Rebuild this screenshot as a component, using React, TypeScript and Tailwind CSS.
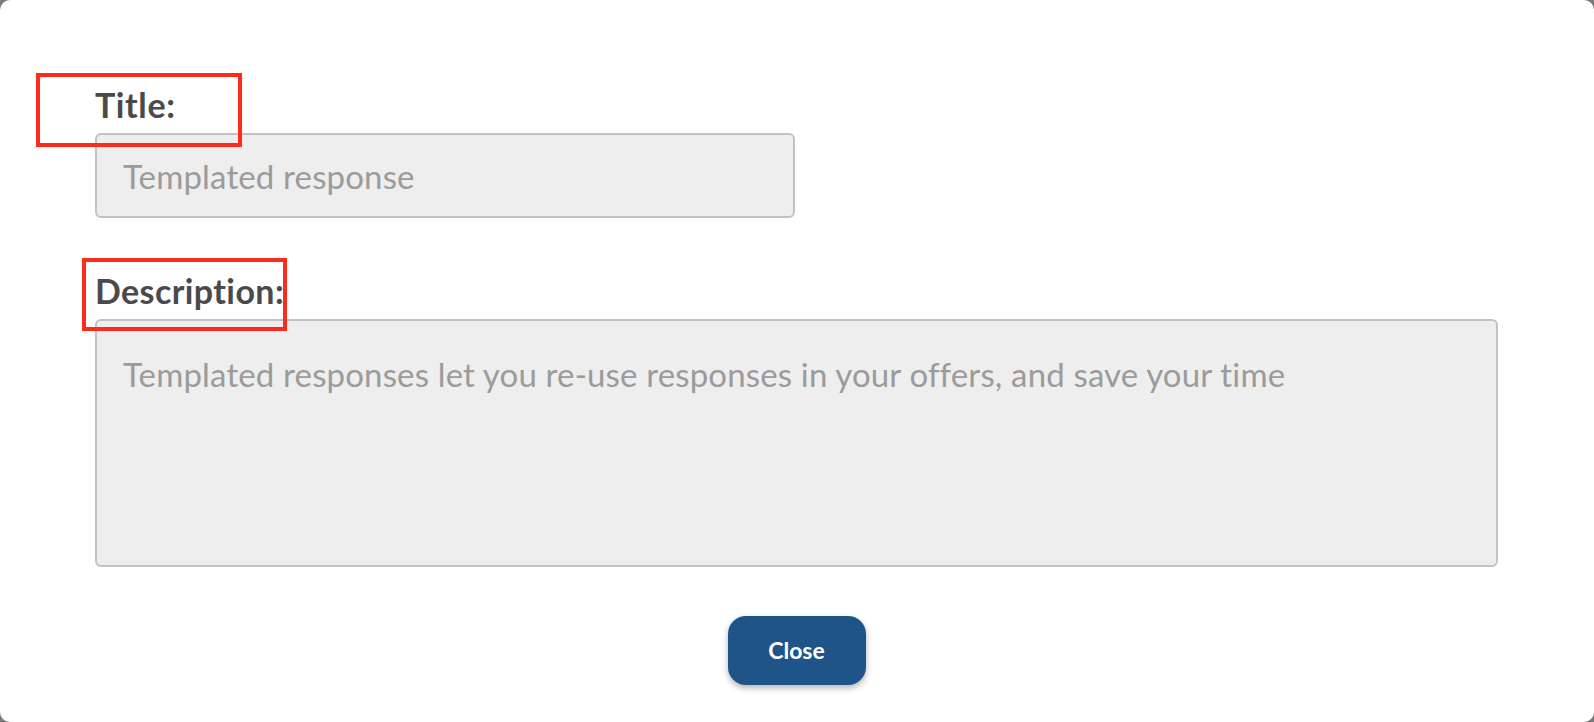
import React from "react";

const FONT = { fontFamily: "Lato, 'Noto Sans', sans-serif" };

export default function App() {
  return (
    <div className="relative h-[722px] w-full overflow-hidden bg-[#7a7a7a]" style={FONT}>
      {/* Modal body */}
      <div className="flex h-full flex-col rounded-[10px] bg-white pl-[95px] pr-[96px] pt-[85px]">
        <label className="mb-2 text-[34px] font-bold leading-[40px] tracking-[0.6px] text-[#4a4a4a]">Title:</label>
        <input
          readOnly
          placeholder="Templated response"
          className="h-[85px] w-[700px] rounded-[6px] border-2 border-[#c2c2c2] bg-[#eeeeee] px-[26px] text-[33px] tracking-[0.15px] text-[#4a4a4a] outline-none placeholder:text-[#9b9b9b]"
        />

        <label className="mb-2 mt-[53px] text-[34px] font-bold leading-[40px] tracking-[0.4px] text-[#4a4a4a]">Description:</label>
        <textarea
          readOnly
          placeholder="Templated responses let you re-use responses in your offers, and save your time"
          className="h-[248px] w-full resize-none rounded-[6px] border-2 border-[#c2c2c2] bg-[#eeeeee] px-[26px] pt-[33px] text-[33px] leading-[40px] tracking-[0.15px] text-[#4a4a4a] outline-none placeholder:text-[#9b9b9b]"
        />

        <div className="mt-[49px] flex justify-center">
          <button className="h-[69px] w-[138px] rounded-[18px] bg-[#1f5488] text-[23px] font-bold text-white shadow-[0_3px_6px_rgba(0,0,0,0.3)]">
            Close
          </button>
        </div>
      </div>

      {/* Annotation boxes */}
      <div className="pointer-events-none absolute left-[36px] top-[73px] h-[74px] w-[206px] border-4 border-[#ff2a1a]" />
      <div className="pointer-events-none absolute left-[82px] top-[258px] h-[73px] w-[205px] border-4 border-[#ff2a1a]" />
    </div>
  );
}
